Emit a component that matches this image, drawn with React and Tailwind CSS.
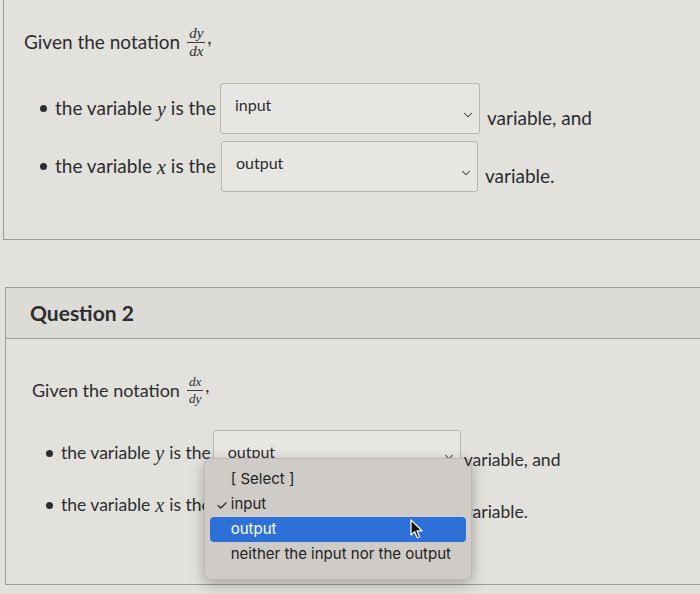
import { ChevronDown } from "lucide-react";

function Frac({ top, bottom, size }) {
  return (
    <span className={`inline-flex flex-col items-center mx-[7px] font-['Liberation_Serif'] italic ${size}`}>
      <span className="px-[2px] pb-[1px] border-b border-[#3a3a3a]">{top}</span>
      <span className="pt-[1px]">{bottom}</span>
    </span>
  );
}

function MathVar({ children }) {
  return <span className="font-['Liberation_Serif'] italic text-[20px] mx-[5px]">{children}</span>;
}

function Select({ value, box }) {
  return (
    <div className={`${box} shrink-0 rounded-[3px] border border-[#b7b5b0] bg-[#e8e6e2] pl-[14px] pr-[4px] flex justify-between`}>
      <span className="pt-[11px] text-[16px] leading-[20px]">{value}</span>
      <ChevronDown size={14} strokeWidth={1.8} className="self-end mb-[11px] text-[#3a3a3a]" />
    </div>
  );
}

function Bullet() {
  return <span className="w-[7px] h-[7px] rounded-full bg-[#2b2d30] mr-[8px] shrink-0" />;
}

function Cursor() {
  return (
    <svg width="14" height="21" viewBox="0 0 14 21" className="absolute left-[200px] top-[2px]">
      <path d="M1 1 L1 16 L4.6 12.6 L7.2 18.8 L9.6 17.8 L7 11.8 L12 11.8 Z" fill="#111" stroke="#fff" strokeWidth="1.2" strokeLinejoin="round" />
    </svg>
  );
}

function Menu() {
  const items = ["[ Select ]", "input", "output", "neither the input nor the output"];
  return (
    <div className="absolute z-10 left-[-9px] top-[28px] w-[268px] rounded-[7px] bg-[#cfcbc6] shadow-[0_4px_14px_rgba(0,0,0,0.28)] border border-[#bdb9b3] pt-[8px] pb-[12px] px-[5px] font-['Inter'] text-[15px] text-[#1e1e1e]">
      {items.map((it, i) => (
        <div
          key={it}
          className={`relative h-[25px] flex items-center pl-[21px] rounded-[4px] ${i === 2 ? "bg-[#2d71d8] text-white" : ""}`}
        >
          {i === 1 && <span className="absolute left-[6px] text-[14px]">✓</span>}
          {it}
          {i === 2 && <Cursor />}
        </div>
      ))}
    </div>
  );
}

export default function App() {
  return (
    <div className="w-[700px] h-[594px] overflow-hidden bg-[#e3e1dc] font-['Lato'] text-[#2b2d30]">
      {/* Question 1 (end) */}
      <div className="ml-[3px] h-[240px] border-l border-b border-[#9d9b96] pl-[20px] pt-[26px]">
        <p className="flex items-center text-[19px]">
          Given the notation <Frac top="dy" bottom="dx" size="text-[15px] leading-[15px]" />
          <span className="-ml-[5px] mt-[-10px]">,</span>
        </p>

        <div className="mt-[24px] pl-[16px]">
          <div className="flex items-center text-[19px]">
            <Bullet />
            <span>the variable</span>
            <MathVar>y</MathVar>
            <span>is the</span>
            <span className="w-[4px]" />
            <Select value="input" box="w-[260px] h-[51px]" />
            <span className="ml-[7px] pt-[20px]">variable, and</span>
          </div>
          <div className="mt-[7px] flex items-center text-[19px]">
            <Bullet />
            <span>the variable</span>
            <MathVar>x</MathVar>
            <span>is the</span>
            <span className="w-[5px]" />
            <Select value="output" box="w-[257px] h-[51px]" />
            <span className="ml-[7px] pt-[20px]">variable.</span>
          </div>
        </div>
      </div>

      {/* Question 2 */}
      <div className="ml-[5px] mt-[47px] border-l border-t border-b border-[#9d9b96]">
        <div className="h-[51px] bg-[#dddbd6] border-b border-[#9d9b96] pl-[24px] flex items-center">
          <h2 className="text-[21px] font-bold">Question 2</h2>
        </div>

        <div className="pl-[26px] pt-[36px] pb-[56px]">
          <p className="flex items-center text-[18px]">
            Given the notation <Frac top="dx" bottom="dy" size="text-[13px] leading-[14px]" />
            <span className="-ml-[5px] mt-[-10px]">,</span>
          </p>

          <div className="mt-[24px] pl-[14px]">
            <div className="flex items-center text-[17.5px]">
              <Bullet />
              <span>the variable</span>
              <MathVar>y</MathVar>
              <span>is the</span>
              <span className="w-[2px]" />
              <div className="relative">
                <Select value="output" box="w-[248px] h-[46px]" />
                <Menu />
              </div>
              <span className="relative z-20 ml-[3px] pt-[14px]">variable, and</span>
            </div>
            <div className="mt-[6px] flex items-center text-[17.5px]">
              <Bullet />
              <span>the variable</span>
              <MathVar>x</MathVar>
              <span>is the</span>
              <span className="w-[2px]" />
              <div className="w-[248px] h-[46px] shrink-0" />
              <span className="ml-[3px] pt-[14px]">variable.</span>
            </div>
          </div>
        </div>
      </div>
    </div>
  );
}
